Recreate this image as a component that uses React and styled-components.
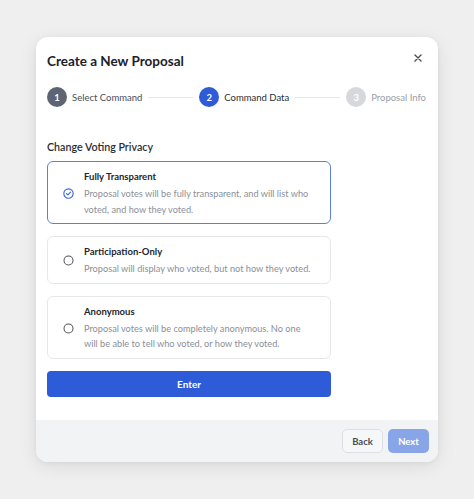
import React, { useState } from "react";
import styled, { createGlobalStyle } from "styled-components";

const Global = createGlobalStyle`
  html, body { margin: 0; padding: 0; background: #efefef; }
  body { font-family: Lato, "Open Sans", "Noto Sans", sans-serif; -webkit-font-smoothing: antialiased; }
  * { box-sizing: border-box; }
`;

const Page = styled.div`
  width: 474px;
  height: 499px;
  padding: 37px 36px 0 36px;
`;

const Card = styled.div`
  width: 402px;
  height: 425px;
  background: #fff;
  border-radius: 12px;
  box-shadow: 0 4px 18px rgba(0, 0, 0, 0.09), 0 1px 4px rgba(0, 0, 0, 0.05);
  display: flex;
  flex-direction: column;
  overflow: hidden;
`;

const Body = styled.div`
  flex: 1;
  padding: 14px 12px 0 11px;
  display: flex;
  flex-direction: column;
`;

const Header = styled.div`
  display: flex;
  justify-content: space-between;
  align-items: flex-start;
`;

const Title = styled.h1`
  margin: 0;
  font-size: 13.5px;
  line-height: 20px;
  font-weight: 700;
  color: #1d2029;
`;

const Close = styled.button`
  border: none;
  background: none;
  padding: 0;
  margin: 1px 2px 0 0;
  width: 12px;
  height: 12px;
  display: flex;
  align-items: center;
  justify-content: center;
  cursor: pointer;
`;

const Stepper = styled.div`
  margin-top: 16px;
  display: flex;
  align-items: center;
  height: 20px;
`;

const Step = styled.div`
  display: flex;
  align-items: center;
  gap: 5px;
`;

const Dot = styled.span`
  width: 20px;
  height: 20px;
  border-radius: 50%;
  background: ${(p) => p.$bg};
  color: #fff;
  font-size: 9.5px;
  font-weight: 700;
  display: flex;
  align-items: center;
  justify-content: center;
`;

const StepLabel = styled.span`
  font-size: 9.5px;
  color: ${(p) => p.$color};
  white-space: nowrap;
`;

const Line = styled.span`
  flex: 1;
  height: 1px;
  background: #e4e6ea;
  margin: 0 6px;
`;

const Section = styled.div`
  margin-top: 32px;
  font-size: 10.7px;
  line-height: 16px;
  font-weight: 600;
  color: #2a2d35;
`;

const Options = styled.div`
  margin-top: 6px;
  width: 284px;
  display: flex;
  flex-direction: column;
  gap: 12px;
`;

const Option = styled.div`
  display: flex;
  align-items: center;
  gap: 10px;
  padding: 8px 16px 6px 15px;
  border-radius: 6px;
  border: ${(p) => (p.$active ? "1.5px solid #5b80dc" : "1.5px solid #e6e7ea")};
  background: #fff;
  cursor: pointer;
`;

const IconBox = styled.span`
  width: 11px;
  height: 11px;
  flex: none;
  display: flex;
`;

const OptionText = styled.div`
  display: flex;
  flex-direction: column;
  gap: 2px;
`;

const OptionTitle = styled.div`
  font-size: 9.5px;
  line-height: 14px;
  font-weight: 700;
  color: #23262e;
`;

const OptionDesc = styled.div`
  font-size: 9.2px;
  line-height: 15.5px;
  color: #8b8f98;
`;

const Enter = styled.button`
  margin-top: 12px;
  width: 284px;
  height: 26px;
  border: none;
  border-radius: 4px;
  background: #2e5bd8;
  color: #fff;
  font-family: inherit;
  font-size: 10px;
  font-weight: 700;
  cursor: pointer;
`;

const Footer = styled.div`
  height: 42px;
  background: #f2f3f5;
  display: flex;
  justify-content: flex-end;
  align-items: center;
  gap: 5px;
  padding-right: 9px;
`;

const FootButton = styled.button`
  height: 24px;
  width: ${(p) => p.$w}px;
  border-radius: 5px;
  font-family: inherit;
  font-size: 9.5px;
  font-weight: 700;
  border: ${(p) => (p.$primary ? "none" : "1px solid #dcdee3")};
  background: ${(p) => (p.$primary ? "#87a5e7" : "#f6f7f8")};
  color: ${(p) => (p.$primary ? "#fff" : "#4a4d55")};
  cursor: pointer;
`;

const CheckIcon = () => (
  <svg width="11" height="11" viewBox="0 0 12 12" fill="none">
    <circle cx="6" cy="6" r="5.1" stroke="#3a63d6" strokeWidth="1.2" />
    <path d="M3.7 6.1 L5.3 7.6 L8.3 4.5" stroke="#3a63d6" strokeWidth="1.2" strokeLinecap="round" strokeLinejoin="round" />
  </svg>
);

const RadioIcon = () => (
  <svg width="11" height="11" viewBox="0 0 12 12" fill="none">
    <circle cx="6" cy="6" r="4.9" stroke="#4f525a" strokeWidth="1.1" />
  </svg>
);

const options = [
  {
    title: "Fully Transparent",
    desc: "Proposal votes will be fully transparent, and will list who voted, and how they voted.",
  },
  {
    title: "Participation-Only",
    desc: "Proposal will display who voted, but not how they voted.",
  },
  {
    title: "Anonymous",
    desc: "Proposal votes will be completely anonymous. No one will be able to tell who voted, or how they voted.",
  },
];

export default function App() {
  const [sel, setSel] = useState(0);
  return (
    <>
      <Global />
      <Page>
        <Card>
          <Body>
            <Header>
              <Title>Create a New Proposal</Title>
              <Close aria-label="Close">
                <svg width="8" height="8" viewBox="0 0 8 8">
                  <path d="M1 1 L7 7 M7 1 L1 7" stroke="#4a4d55" strokeWidth="1.4" strokeLinecap="round" />
                </svg>
              </Close>
            </Header>
            <Stepper>
              <Step>
                <Dot $bg="#5f6475">1</Dot>
                <StepLabel $color="#4a4e58">Select Command</StepLabel>
              </Step>
              <Line />
              <Step>
                <Dot $bg="#2e5bd8">2</Dot>
                <StepLabel $color="#2a2d35">Command Data</StepLabel>
              </Step>
              <Line />
              <Step>
                <Dot $bg="#d6d8dc">3</Dot>
                <StepLabel $color="#9a9ea6">Proposal Info</StepLabel>
              </Step>
            </Stepper>
            <Section>Change Voting Privacy</Section>
            <Options>
              {options.map((o, i) => (
                <Option key={o.title} $active={sel === i} onClick={() => setSel(i)}>
                  <IconBox>{sel === i ? <CheckIcon /> : <RadioIcon />}</IconBox>
                  <OptionText>
                    <OptionTitle>{o.title}</OptionTitle>
                    <OptionDesc>{o.desc}</OptionDesc>
                  </OptionText>
                </Option>
              ))}
            </Options>
            <Enter>Enter</Enter>
          </Body>
          <Footer>
            <FootButton $w={41}>Back</FootButton>
            <FootButton $w={41} $primary>Next</FootButton>
          </Footer>
        </Card>
      </Page>
    </>
  );
}
